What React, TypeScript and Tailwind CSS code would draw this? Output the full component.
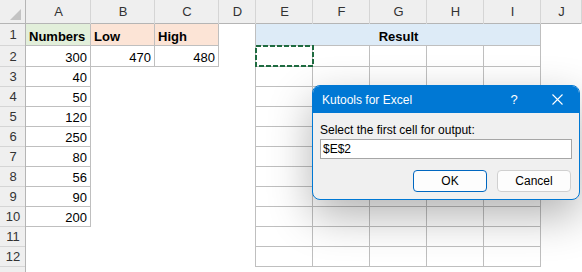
const COLS = ['A', 'B', 'C', 'D', 'E', 'F', 'G', 'H', 'I', 'J'];
const ROWS = [1, 2, 3, 4, 5, 6, 7, 8, 9, 10, 11, 12, 13];

const values: Record<string, { text: string; bold?: boolean; align?: 'left' | 'right'; fill?: string }> = {
  A1: { text: 'Numbers', bold: true, align: 'left', fill: 'bg-[#e2efda]' },
  B1: { text: 'Low', bold: true, align: 'left', fill: 'bg-[#fce4d6]' },
  C1: { text: 'High', bold: true, align: 'left', fill: 'bg-[#fce4d6]' },
  A2: { text: '300' },
  B2: { text: '470' },
  C2: { text: '480' },
  A3: { text: '40' },
  A4: { text: '50' },
  A5: { text: '120' },
  A6: { text: '250' },
  A7: { text: '80' },
  A8: { text: '56' },
  A9: { text: '90' },
  A10: { text: '200' },
};

// which cells carry a thin border in the sheet
function bordered(r: number, c: number) {
  if (c === 0) return r <= 10;
  if (c === 1 || c === 2) return r <= 2;
  if (c >= 4 && c <= 8) return r <= 12;
  return false;
}

function lineClass(right: boolean, bottom: boolean) {
  if (right && bottom) return 'shadow-[inset_-1px_-1px_0_#bfbfbf]';
  if (right) return 'shadow-[inset_-1px_0_0_#bfbfbf]';
  if (bottom) return 'shadow-[inset_0_-1px_0_#bfbfbf]';
  return '';
}

function Cell({ r, c }: { r: number; c: number }) {
  const key = `${COLS[c]}${r}`;
  const v = values[key];
  const right = bordered(r, c) || bordered(r, c + 1);
  const bottom = bordered(r, c) || bordered(r + 1, c);
  return (
    <div
      className={`relative flex items-end pb-px leading-[16px] text-[13px] text-black ${lineClass(right, bottom)} ${
        v?.fill ?? ''
      } ${v?.align === 'left' ? 'justify-start pl-[3px]' : 'justify-end pr-[4px]'} ${v?.bold ? 'font-bold' : ''}`}
    >
      {v?.text}
      {key === 'E2' && (
        <svg className="absolute -left-px -top-px z-10" width="59" height="22" viewBox="0 0 59 22">
          <rect x="1" y="1" width="57" height="20" fill="none" stroke="#1e6b40" strokeWidth="2" strokeDasharray="5 2" />
        </svg>
      )}
    </div>
  );
}

function Dialog() {
  return (
    <div className="absolute left-[312px] top-[85px] z-20 w-[268px] rounded-lg border border-[#0078d4] bg-[#f0f0f0] shadow-[0_16px_44px_rgba(0,0,0,0.3)] overflow-hidden font-['Liberation_Sans',Arial,sans-serif]">
      <div className="flex h-[27px] items-center bg-[#0078d4] pl-[9px] text-white">
        <span className="flex-1 text-[12px]">Kutools for Excel</span>
        <span className="w-[14px] text-[13px] mr-[31px] text-center">?</span>
        <svg className="mr-[16px]" width="11" height="11" viewBox="0 0 11 11">
          <path d="M0.5 0.5 L10.5 10.5 M10.5 0.5 L0.5 10.5" stroke="white" strokeWidth="1.1" />
        </svg>
      </div>
      <div className="flex flex-col px-[7px] pt-[9px] pb-[7px]">
        <div className="text-[12px] leading-[16px] text-black">Select the first cell for output:</div>
        <div className="mt-px flex h-[20px] items-center border border-[#a6a6a6] bg-white pl-[2px] text-[12px] text-black">
          $E$2
        </div>
        <div className="mt-[11px] flex justify-end gap-[10px] pr-px">
          <button className="h-[22px] w-[74px] rounded-[4px] border-[1.5px] border-[#0067c0] bg-[#fdfdfd] text-[12px] text-black">
            OK
          </button>
          <button className="h-[22px] w-[74px] rounded-[4px] border border-[#d0d0d0] bg-[#fdfdfd] text-[12px] text-black">
            Cancel
          </button>
        </div>
      </div>
    </div>
  );
}

export default function App() {
  return (
    <div className="relative h-[272px] w-[582px] overflow-hidden bg-white font-['Liberation_Sans',Arial,sans-serif]">
      <div className="grid grid-cols-[26px_65px_64px_64px_37px_57px_57px_57px_57px_57px_1fr] grid-rows-[24px_22px_21px_repeat(11,20px)]">
        {/* corner */}
        <div className="relative bg-[#efefef] shadow-[inset_-1px_-1px_0_#b5b5b5]">
          <svg className="absolute left-0 top-0" width="26" height="24" viewBox="0 0 26 24">
            <polygon points="21,9 21,20 10,20" fill="#c3c3c3" />
          </svg>
        </div>
        {COLS.map((c) => (
          <div
            key={c}
            className="flex items-center justify-center bg-[#efefef] text-[13px] text-[#333] shadow-[inset_-1px_0_0_#d5d5d5,inset_0_-1px_0_#b5b5b5]"
          >
            {c}
          </div>
        ))}

        {ROWS.map((r) => [
          <div
            key={`h${r}`}
            className="flex items-center justify-center bg-[#efefef] text-[13px] text-[#333] shadow-[inset_-1px_0_0_#b5b5b5,inset_0_-1px_0_#d5d5d5]"
          >
            {r <= 12 ? r : ''}
          </div>,
          ...COLS.map((_, ci) => {
            if (r === 1 && ci === 4) {
              return (
                <div
                  key={`E1`}
                  className="col-span-5 flex items-end justify-center pb-px leading-[16px] bg-[#ddebf7] text-[13px] font-bold text-black shadow-[inset_-1px_-1px_0_#bfbfbf]"
                >
                  Result
                </div>
              );
            }
            if (r === 1 && ci > 4 && ci <= 8) return null;
            return <Cell key={`${r}-${ci}`} r={r} c={ci} />;
          }),
        ])}
      </div>
      <Dialog />
    </div>
  );
}
